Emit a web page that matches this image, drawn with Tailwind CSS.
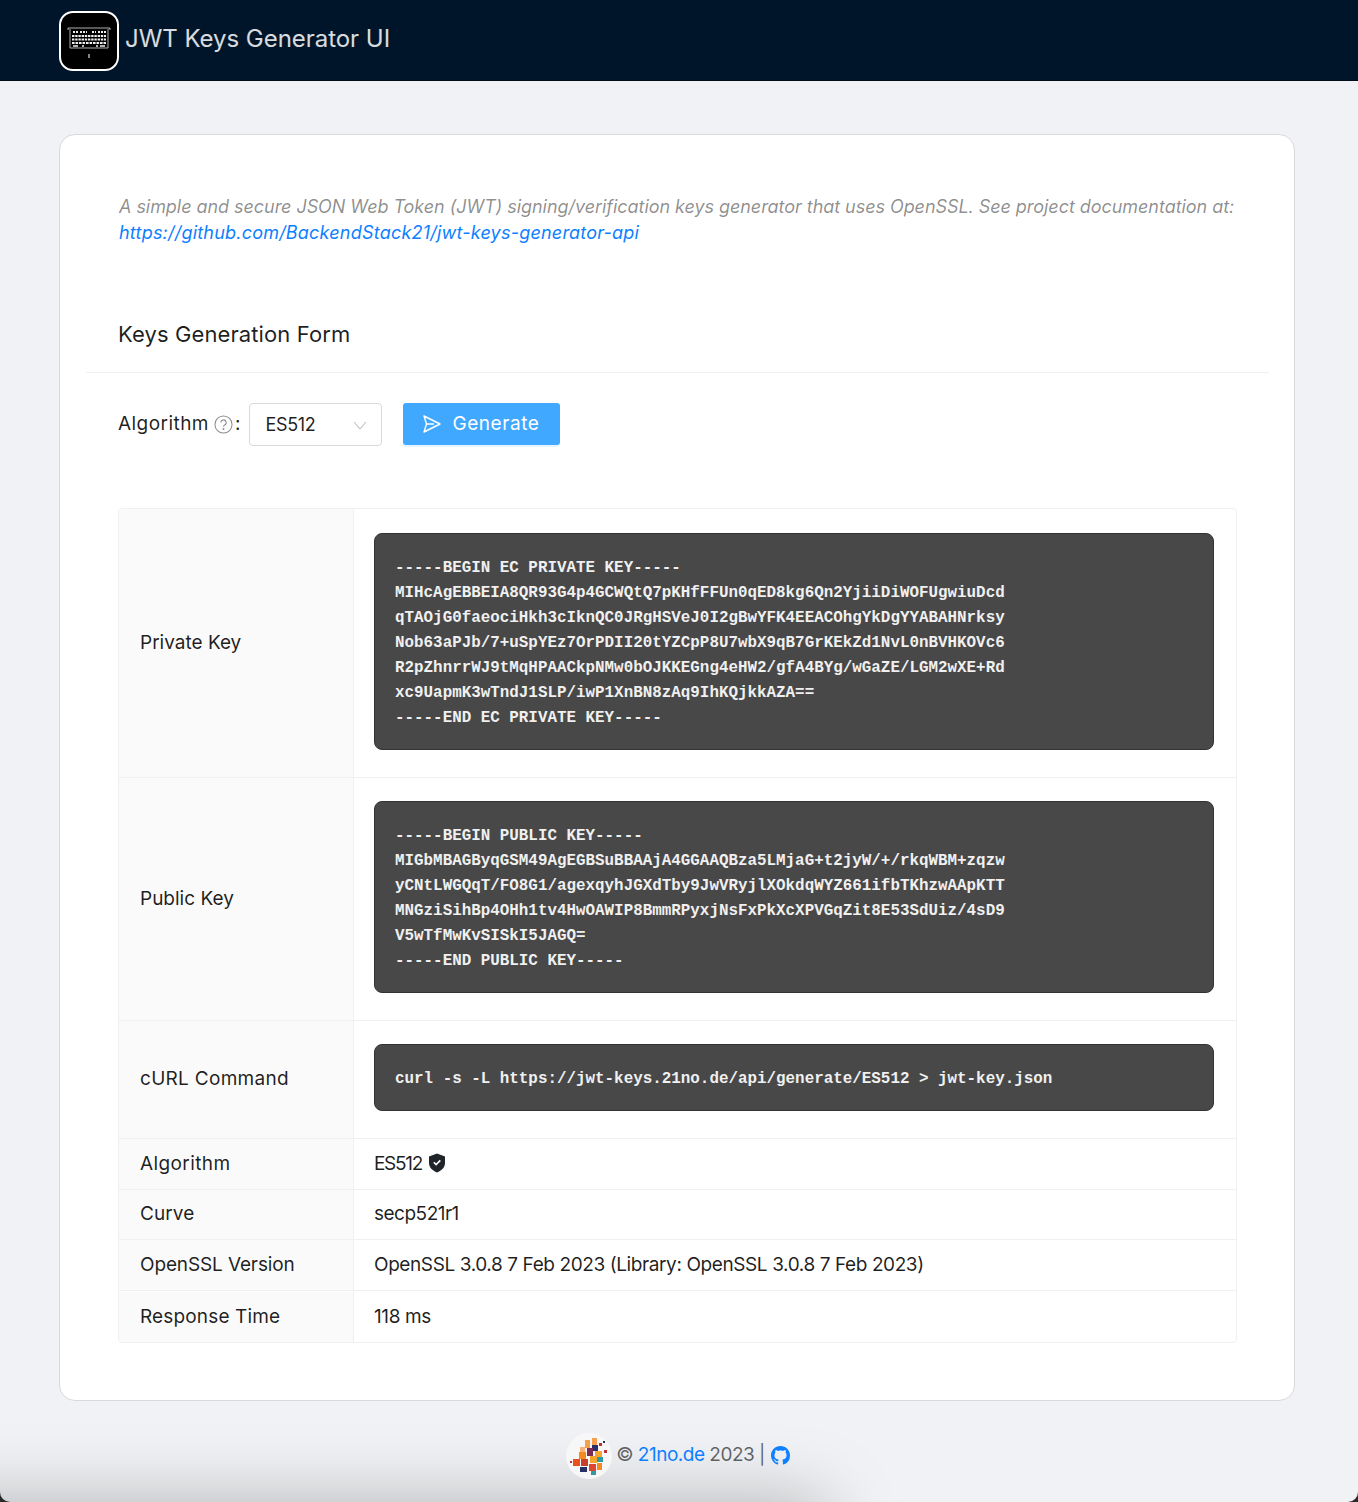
<!DOCTYPE html>
<html lang="en">

<head>
  <meta charset="UTF-8" />
  <meta name="viewport" content="width=device-width, initial-scale=1.0" />
  <title>JWT Keys Generator UI</title>
  <script src="https://cdn.jsdelivr.net/npm/@tailwindcss/browser@4"></script>
</head>

<body class="relative h-[1502px] overflow-hidden bg-[#f0f2f5] font-['Inter',sans-serif] text-[#000000e0]">
  <!-- window shadow + rounded corners of the original capture -->
  <div class="pointer-events-none absolute inset-0 overflow-hidden">
    <div class="absolute top-[1500px] left-[-200px] h-[200px] w-[1025px] bg-black/25 blur-[35px]"></div>
  </div>
  <div class="pointer-events-none absolute inset-0 z-20 overflow-hidden">
    <div class="h-full w-full rounded-b-[10px] shadow-[0_0_0_20px_#2a2a2a]"></div>
  </div>

  <header class="flex h-[81px] items-center gap-[6px] border-b border-[#000c17] bg-[#001529] pl-[59px]">
    <div class="mt-[1px] flex h-[60px] w-[60px] items-center justify-center rounded-[14px] border-2 border-white bg-black">
      <svg class="h-[48px] w-[48px]" viewBox="0 0 48 48">
        <path d="M3 11h42M3 11v2M45 11v2M5 12v19h38V12" fill="none" stroke="#ddd" stroke-width=".8" />
        <path d="M8 15h5m2 0h7m5 0h4m2 0h8" fill="none" stroke="#eee" stroke-width="2" stroke-dasharray="2 1" />
        <path d="M7 19h34M7 22.500h34" fill="none" stroke="#eee" stroke-width="2.200" stroke-dasharray="2.400 .8" />
        <path d="M7 26h34" fill="none" stroke="#eee" stroke-width="2" stroke-dasharray="2.600 .9" />
        <path d="M8 29h5m4 0h2m12 0h2m2 0h5" fill="none" stroke="#eee" stroke-width="1.600" />
        <path d="M24 37v4" stroke="#ddd" stroke-width="1.200" />
      </svg>
    </div>
    <h1 class="pb-[3px] text-[24px] tracking-[-.04px] text-white/85">JWT Keys Generator UI</h1>
  </header>

  <main class="mx-[59px] mt-[53px] h-[1267px] w-[1236px] rounded-[16px] border border-[#d9d9d9] bg-white">
    <p class="px-[59px] pt-[59px] text-[18px] leading-[26px] tracking-[-.05px] text-[#00000073] italic">
      A simple and secure JSON Web Token (JWT) signing/verification keys generator that uses OpenSSL. See project documentation at:
      <a class="tracking-[.21px] text-[#0d7fff]" href="#">https://github.com/BackendStack21/jwt-keys-generator-api</a>
    </p>

    <h2 class="px-[58px] pt-[74px] text-[22px] leading-[28px] tracking-[.1px]">Keys Generation Form</h2>
    <div class="mt-[24px] mr-[25px] ml-[26px] border-t border-[#f0f0f0]"></div>

    <div class="flex items-center px-[58px] pt-[30px]">
      <span class="text-[19px] tracking-[.45px]">Algorithm</span>
      <svg class="mr-[2px] ml-[5px] h-[19px] w-[19px] text-[#00000073]" viewBox="0 0 20 20" fill="none" stroke="currentColor" stroke-width="1.100">
        <circle cx="10" cy="10" r="9" />
        <path d="M7.200 8a2.800 2.800 0 1 1 4 2.500c-.8.400-1.200 1-1.200 1.900" />
        <circle cx="10" cy="14.800" r=".5" />
      </svg>
      <span class="text-[19px]">:</span>
      <div class="ml-[9px] flex h-[43px] w-[133px] items-center justify-between rounded-[4px] border border-[#d9d9d9] pr-[14px] pl-[15px] text-[18px] tracking-[-.3px]">
        ES512
        <svg class="h-[14px] w-[14px] text-[#00000040]" viewBox="0 0 14 14" fill="none" stroke="currentColor" stroke-width="1.100">
          <path d="M1 4l6 7 6-7" />
        </svg>
      </div>
      <button class="ml-[21px] flex h-[42px] w-[157px] items-center justify-center gap-[10px] self-start rounded-[3px] bg-[#40a9ff] pr-[2px] text-[19px] tracking-[.55px] text-white shadow-[0_2px_0_rgba(5,145,255,0.1)]">
        <svg class="h-[20px] w-[20px]" viewBox="0 0 20 20" fill="none" stroke="currentColor" stroke-width="1.400" stroke-linejoin="round">
          <path d="M2 2l16 8-16 8 2.500-8zM4.500 10H12" />
        </svg>
        Generate
      </button>
    </div>

    <div class="mx-[58px] mt-[62px] w-[1119px] overflow-hidden rounded-[4px] border border-[#f0f0f0] text-[19px]">
      <div class="flex h-[269px] border-b border-[#f0f0f0]">
        <div class="flex w-[235px] shrink-0 items-center border-r border-[#f0f0f0] bg-[#fafafa] pl-[21px]">Private Key</div>
        <div class="flex-1 pt-[24px] pr-[22px] pl-[20px]">
          <pre class="h-[217px] w-full rounded-[8px] border border-[#333] bg-[#484848] px-[20px] pt-[22px] font-['Liberation_Mono',monospace] text-[15.88px] leading-[25px] font-bold text-[#f0f0f0]">-----BEGIN EC PRIVATE KEY-----
MIHcAgEBBEIA8QR93G4p4GCWQtQ7pKHfFFUn0qED8kg6Qn2YjiiDiWOFUgwiuDcd
qTAOjG0faeociHkh3cIknQC0JRgHSVeJ0I2gBwYFK4EEACOhgYkDgYYABAHNrksy
Nob63aPJb/7+uSpYEz7OrPDII20tYZCpP8U7wbX9qB7GrKEkZd1NvL0nBVHKOVc6
R2pZhnrrWJ9tMqHPAACkpNMw0bOJKKEGng4eHW2/gfA4BYg/wGaZE/LGM2wXE+Rd
xc9UapmK3wTndJ1SLP/iwP1XnBN8zAq9IhKQjkkAZA==
-----END EC PRIVATE KEY-----</pre>
        </div>
      </div>
      <div class="flex h-[243px] border-b border-[#f0f0f0]">
        <div class="flex w-[235px] shrink-0 items-center border-r border-[#f0f0f0] bg-[#fafafa] pl-[21px]">Public Key</div>
        <div class="flex-1 pt-[23px] pr-[22px] pl-[20px]">
          <pre class="h-[192px] w-full rounded-[8px] border border-[#333] bg-[#484848] px-[20px] pt-[22px] font-['Liberation_Mono',monospace] text-[15.88px] leading-[25px] font-bold text-[#f0f0f0]">-----BEGIN PUBLIC KEY-----
MIGbMBAGByqGSM49AgEGBSuBBAAjA4GGAAQBza5LMjaG+t2jyW/+/rkqWBM+zqzw
yCNtLWGQqT/FO8G1/agexqyhJGXdTby9JwVRyjlXOkdqWYZ661ifbTKhzwAApKTT
MNGziSihBp4OHh1tv4HwOAWIP8BmmRPyxjNsFxPkXcXPVGqZit8E53SdUiz/4sD9
V5wTfMwKvSISkI5JAGQ=
-----END PUBLIC KEY-----</pre>
        </div>
      </div>
      <div class="flex h-[118px] border-b border-[#f0f0f0]">
        <div class="flex w-[235px] shrink-0 items-center border-r border-[#f0f0f0] bg-[#fafafa] pl-[21px] tracking-[.3px]">cURL Command</div>
        <div class="flex-1 pt-[23px] pr-[22px] pl-[20px]">
          <pre class="h-[67px] w-full rounded-[8px] border border-[#333] bg-[#484848] px-[20px] pt-[22px] font-['Liberation_Mono',monospace] text-[15.88px] leading-[25px] font-bold text-[#f0f0f0]">curl -s -L https://jwt-keys.21no.de/api/generate/ES512 &gt; jwt-key.json</pre>
        </div>
      </div>
      <div class="flex h-[51px] border-b border-[#f0f0f0]">
        <div class="flex w-[235px] shrink-0 items-center border-r border-[#f0f0f0] bg-[#fafafa] pl-[21px] tracking-[.4px]">Algorithm</div>
        <div class="flex flex-1 items-center gap-[6px] pr-[22px] pl-[20px] tracking-[-1.3px]">
          ES512
          <svg class="mb-[2px] h-[20px] w-[18px] text-[#1f2429]" viewBox="0 0 18 20">
            <path fill="currentColor" d="M9 .5l8 3v6.500c0 4.500-3.400 7.500-8 9.500-4.600-2-8-5-8-9.500V3.500z" />
            <path fill="none" stroke="#fff" stroke-width="1.600" d="M5.800 9.300l2.300 2.300 4.200-4.200" />
          </svg>
        </div>
      </div>
      <div class="flex h-[50px] border-b border-[#f0f0f0]">
        <div class="flex w-[235px] shrink-0 items-center border-r border-[#f0f0f0] bg-[#fafafa] pl-[21px] tracking-[.1px]">Curve</div>
        <div class="flex flex-1 items-center pr-[22px] pl-[20px] tracking-[-.5px]">secp521r1</div>
      </div>
      <div class="flex h-[51px] border-b border-[#f0f0f0]">
        <div class="flex w-[235px] shrink-0 items-center border-r border-[#f0f0f0] bg-[#fafafa] pl-[21px] tracking-[-.13px]">OpenSSL Version</div>
        <div class="flex flex-1 items-center pr-[22px] pl-[20px] tracking-[-.4px]">OpenSSL 3.0.8 7 Feb 2023 (Library: OpenSSL 3.0.8 7 Feb 2023)</div>
      </div>
      <div class="flex h-[51px] pt-[1px]">
        <div class="flex w-[235px] shrink-0 items-center border-r border-[#f0f0f0] bg-[#fafafa] pl-[21px] tracking-[.15px]">Response Time</div>
        <div class="flex flex-1 items-center pr-[22px] pl-[20px] tracking-[-.4px]">118 ms</div>
      </div>
    </div>
  </main>

  <footer class="relative z-10 mt-[32px] flex items-center justify-center pr-[2px] text-[19px] text-[#00000099]">
    <svg class="mr-[4px] h-[46px] w-[46px]" viewBox="0 0 46 46">
      <circle cx="23" cy="23" r="23" fill="#f7f7f7" />
      <rect x="19" y="7" width="5" height="8" fill="#f6a04d" />
      <rect x="26" y="5" width="5" height="7" fill="#f6a04d" />
      <rect x="26" y="12" width="6" height="6" fill="#27306b" />
      <rect x="33" y="10" width="3" height="3" fill="#c22f3a" />
      <rect x="14" y="14" width="5" height="7" fill="#f7b27a" />
      <rect x="13" y="19" width="7" height="7" fill="#f58a1f" />
      <rect x="21" y="15" width="6" height="8" fill="#7d2b55" />
      <rect x="29" y="18" width="7" height="6" fill="#f4a52d" />
      <rect x="24" y="23" width="7" height="7" fill="#f4a52d" />
      <rect x="7" y="26" width="7" height="7" fill="#e9501f" />
      <rect x="15" y="26" width="7" height="7" fill="#c8402b" />
      <rect x="31" y="24" width="6" height="5" fill="#2f9aa0" />
      <rect x="23" y="31" width="7" height="7" fill="#e0452d" />
      <rect x="14" y="34" width="7" height="5" fill="#27306b" />
      <rect x="31" y="30" width="5" height="7" fill="#f58a1f" />
      <rect x="25" y="38" width="5" height="4" fill="#2f9aa0" />
      <rect x="38" y="17" width="3" height="3" fill="#c22f3a" />
      <rect x="4" y="28" width="2" height="2" fill="#c22f3a" />
      <rect x="37" y="8" width="2" height="2" fill="#27306b" />
    </svg>
    <span class="mb-[2px] tracking-[-.5px]">© <a class="text-[#0d7fff]" href="#">21no.de</a> 2023 |</span>
    <svg class="mb-[2px] ml-[6px] h-[19px] w-[19px] text-[#0d7fff]" viewBox="0 0 16 16" fill="currentColor">
      <path d="M8 0C3.580 0 0 3.580 0 8c0 3.540 2.290 6.530 5.470 7.590.4.070.55-.17.55-.38 0-.19-.01-.82-.01-1.490-2.010.37-2.530-.49-2.690-.94-.09-.23-.48-.94-.82-1.130-.28-.15-.68-.52-.01-.53.63-.01 1.080.58 1.230.82.72 1.210 1.870.87 2.330.66.070-.52.28-.87.51-1.070-1.780-.2-3.640-.89-3.640-3.950 0-.87.31-1.590.82-2.150-.08-.2-.36-1.020.08-2.120 0 0 .67-.21 2.200.82.640-.18 1.320-.27 2-.27s1.360.09 2 .27c1.530-1.040 2.200-.82 2.200-.82.440 1.100.16 1.920.08 2.120.51.56.82 1.270.82 2.150 0 3.070-1.870 3.750-3.650 3.950.29.25.54.73.54 1.480 0 1.070-.01 1.930-.01 2.200 0 .21.15.46.55.38A8.010 8.010 0 0 0 16 8c0-4.420-3.580-8-8-8z" />
    </svg>
  </footer>
</body>

</html>
